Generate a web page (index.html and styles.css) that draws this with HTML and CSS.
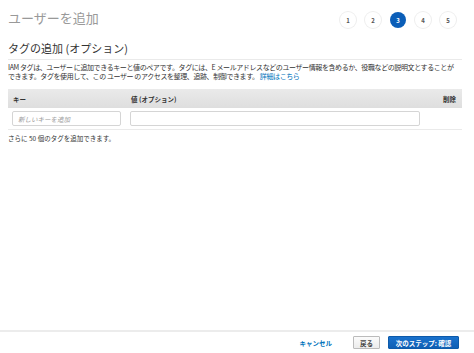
FILE: index.html
```html
<!DOCTYPE html>
<html>

<head>
	<title>ユーザーを追加</title>
	<meta charset="UTF-8" />

	<link rel="stylesheet" href="styles.css">
</head>

<body>

<div class="page">
	<div class="main">
		<div class="top">
			<span class="title">ユーザーを追加</span>
			<div class="steps">
				<span class="step">1</span>
				<span class="step">2</span>
				<span class="step current">3</span>
				<span class="step">4</span>
				<span class="step">5</span>
			</div>
		</div>

		<div class="section-header">タグの追加 (オプション)</div>

		<p class="intro">IAM タグは、ユーザー に追加できるキーと値のペアです。タグには、E メールアドレスなどのユーザー情報を含めるか、役職などの説明文とすることが<br />できます。タグを使用して、この ユーザー のアクセスを整理、追跡、制御できます。 <a href="#">詳細はこちら</a></p>

		<div class="tags">
			<div class="tags-head">
				<span>キー</span>
				<span>値 (オプション)</span>
				<span class="remove">削除</span>
			</div>
			<div class="tags-row">
				<input class="key" type="text" placeholder="新しいキーを追加" />
				<input class="val" type="text" />
				<span></span>
			</div>
		</div>

		<div class="note">さらに 50 個のタグを追加できます。</div>
	</div>

	<div class="footer">
		<a class="cancel" href="#">キャンセル</a>
		<button class="btn">戻る</button>
		<button class="btn primary">次のステップ: 確認</button>
	</div>
</div>

</body>

</html>
```

FILE: styles.css
```css
html, body {
  margin: 0;
  height: 100%;
}

body {
  font-family: "Noto Sans CJK JP", "Noto Sans", sans-serif;
  color: #333;
  background: #fff;
}

.page {
  display: flex;
  flex-direction: column;
  height: 100%;
}

.main {
  flex: 1;
  padding: 0 12px 0 8px;
}

.top {
  display: flex;
  justify-content: space-between;
  align-items: center;
  height: 40px;
}

.title {
  font-size: 13px;
  color: #999;
  margin-top: -6px;
}

.steps {
  display: flex;
  gap: 9px;
  margin-right: 6px;
}

.step {
  width: 16px;
  height: 16px;
  border-radius: 50%;
  box-shadow: 0 0 0 1px #eee;
  display: flex;
  align-items: center;
  justify-content: center;
  font-size: 6px;
  font-weight: bold;
  color: #555;
}

.step.current {
  background: #0b5eb8;
  box-shadow: none;
  color: #fff;
}

.section-header {
  font-size: 11px;
  line-height: 16px;
  padding-bottom: 3px;
  border-bottom: 1px solid #eaeaea;
}

.intro {
  font-size: 7px;
  line-height: 9px;
  letter-spacing: -0.4px;
  white-space: nowrap;
  margin: 3px 0 8px;
}

.intro a {
  color: #0073bb;
  text-decoration: none;
}

.tags-head,
.tags-row {
  display: grid;
  grid-template-columns: 118px 1fr 36px;
  align-items: center;
}

.tags-head {
  height: 19px;
  background: linear-gradient(#eaeaea, #dedede);
  font-size: 6.5px;
  font-weight: bold;
  color: #333;
}

.tags-head span {
  padding-left: 5px;
}

.tags-head .remove {
  text-align: right;
  padding-right: 6px;
}

.tags-row {
  height: 21px;
  border-bottom: 1px solid #eaeaea;
}

.tags-row input {
  box-sizing: border-box;
  height: 15px;
  border: 1px solid #d5d5d5;
  border-radius: 2px;
  font-family: inherit;
  font-size: 6.5px;
  padding: 0 5px;
  outline: none;
}

.tags-row .key {
  margin-left: 4px;
  width: 109px;
}

.tags-row .val {
  margin-left: 4px;
  width: 290px;
}

.tags-row input::placeholder {
  color: #999;
  font-style: italic;
}

.note {
  font-size: 6.5px;
  margin-top: 3px;
}

.footer {
  display: flex;
  justify-content: flex-end;
  align-items: center;
  height: 21px;
  border-top: 2px solid #ececec;
  padding: 0 15px 0 0;
}

.cancel {
  font-size: 6.5px;
  font-weight: bold;
  color: #0073bb;
  text-decoration: none;
  margin-right: 13px;
}

.btn {
  height: 13px;
  border: 1px solid #bbb;
  border-radius: 1px;
  background: linear-gradient(#fbfbfb, #ececec);
  font-family: inherit;
  font-size: 6.5px;
  font-weight: bold;
  color: #444;
  padding: 0 6px;
  margin-left: 8px;
}

.btn.primary {
  width: 71px;
  background: linear-gradient(#1a72cd, #0f5fb4);
  border-color: #0d5aaa;
  color: #fff;
}
```
